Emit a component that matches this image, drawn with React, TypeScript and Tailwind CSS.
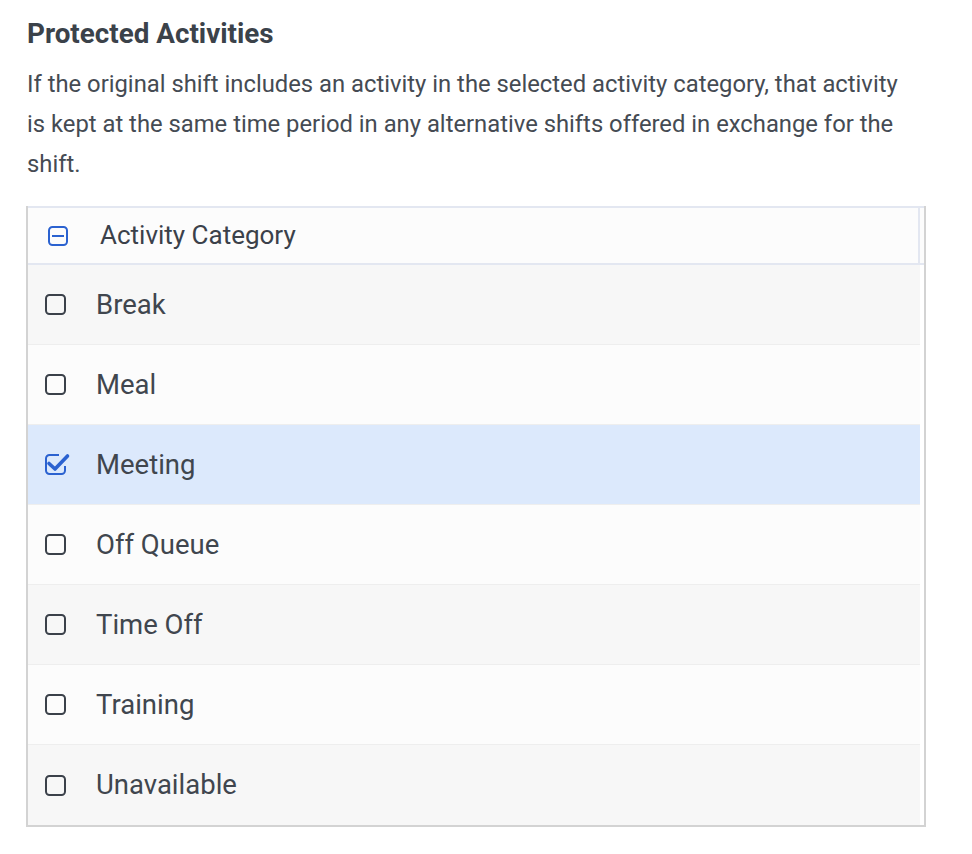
import React from "react";

const rows = [
  { label: "Break", bg: "bg-[#f7f7f7]", checked: false },
  { label: "Meal", bg: "bg-[#fcfcfc]", checked: false },
  { label: "Meeting", bg: "bg-[#dce9fc]", checked: true },
  { label: "Off Queue", bg: "bg-[#fcfcfc]", checked: false },
  { label: "Time Off", bg: "bg-[#f7f7f7]", checked: false },
  { label: "Training", bg: "bg-[#fcfcfc]", checked: false },
  { label: "Unavailable", bg: "bg-[#f7f7f7]", checked: false },
];

function Box({ checked }: { checked: boolean }) {
  if (checked) {
    return (
      <svg width="21" height="21" viewBox="0 0 21 21" className="shrink-0 overflow-visible">
        <path d="M14 1 H4.5 A3.5 3.5 0 0 0 1 4.5 V16.5 A3.5 3.5 0 0 0 4.5 20 H16.5 A3.5 3.5 0 0 0 20 16.5 V12" fill="none" stroke="#2b62d0" strokeWidth="2" />
        <path d="M4 9.5 L10 15 L22.5 2" fill="none" stroke="#2b62d0" strokeWidth="3.6" strokeLinecap="round" strokeLinejoin="round" />
      </svg>
    );
  }
  return (
    <svg width="21" height="21" viewBox="0 0 21 21" className="shrink-0">
      <rect x="1" y="1" width="19" height="19" rx="3.5" fill="none" stroke="#3b414a" strokeWidth="2" />
    </svg>
  );
}

export default function App() {
  return (
    <div className="bg-white min-h-[854px] w-[972px] pl-[27px] pt-[16px] font-['Roboto',sans-serif]">
      <h2 className="text-[27.8px] leading-[36px] font-bold text-[#3b424a]">Protected Activities</h2>
      <p className="mt-[12px] w-[885px] text-[23.8px] leading-[40px] text-[#454b53]">
        If the original shift includes an activity in the selected activity category, that activity is kept at the same time period in any alternative shifts offered in exchange for the shift.
      </p>
      <div className="mt-[22px] ml-[-1px] w-[900px] border-x-2 border-b-2 border-[#d3d3d3]">
        <div className="flex h-[59px] items-center border-y-2 border-[#e3e7f1] bg-[#fcfcfc]">
          <div className="flex h-full flex-1 items-center border-r-2 border-[#e3e7f1]">
            <div className="flex w-[72px] pl-[20px]">
              <svg width="20" height="20" viewBox="0 0 20 20">
                <rect x="1" y="1" width="18" height="18" rx="3.5" fill="none" stroke="#2b62d0" strokeWidth="2" />
                <path d="M4 10 H16" stroke="#2b62d0" strokeWidth="2" />
              </svg>
            </div>
            <span className="text-[26px] text-[#3b414a]">Activity Category</span>
          </div>
          <div className="w-[4px]" />
        </div>
        <div className="pr-[4px]">
          {rows.map((r, i) => (
            <div
              key={r.label}
              className={`flex h-[80px] items-center ${r.bg} ${i < rows.length - 1 ? "border-b border-[#eeeeee]" : ""}`}
            >
              <div className="flex w-[68px] pl-[17px]">
                <Box checked={r.checked} />
              </div>
              <span className="text-[27.5px] text-[#40464e]">{r.label}</span>
            </div>
          ))}
        </div>
      </div>
    </div>
  );
}
